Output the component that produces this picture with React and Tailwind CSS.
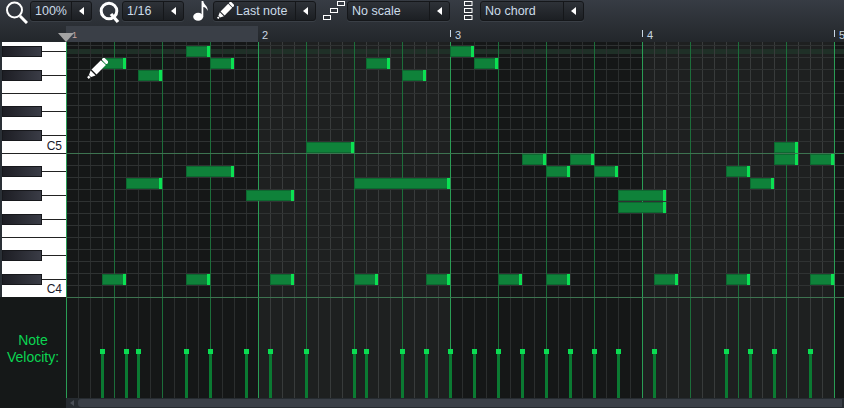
const ROW = 12;
const TOP = 42; // y of the grid canvas in the window
const PX = 66; // x of the grid canvas in the window

// [start x, end x, row]
const notes = [
  [186, 210, 0], [450, 474, 0],
  [102, 126, 1], [210, 234, 1], [366, 390, 1], [474, 498, 1],
  [138, 162, 2], [402, 426, 2],
  [306, 354, 8], [774, 798, 8],
  [522, 546, 9], [570, 594, 9], [774, 798, 9], [810, 834, 9],
  [186, 234, 10], [546, 570, 10], [594, 618, 10], [726, 750, 10],
  [126, 162, 11], [354, 450, 11], [750, 774, 11],
  [246, 294, 12], [618, 666, 12],
  [618, 666, 13],
  [102, 126, 19], [186, 210, 19], [270, 294, 19], [354, 378, 19], [426, 450, 19],
  [498, 522, 19], [546, 570, 19], [654, 678, 19], [726, 750, 19], [810, 834, 19],
];

const velocities = [
  102, 126, 138, 186, 210, 246, 270, 306, 354, 366, 402, 426, 450, 474, 498, 522,
  546, 570, 594, 618, 654, 726, 750, 774, 810,
];

// tops of the black keys, and lines on the white keys
const blackKeys = [46, 70, 106, 130, 166, 190, 214, 250, 274];
const shortLines = [51, 75, 111, 135, 171, 195, 219, 255, 279];
const fullLines = [93, 153, 237];

function range(from, to, step) {
  const out = [];
  for (let i = from; i <= to; i += step) out.push(i);
  return out;
}

function PencilIcon({ className }) {
  return (
    <svg viewBox="0 0 20 20" className={className}>
      <g transform="rotate(45 10 10)">
        <rect x="6.8" y="-2" width="6.4" height="3" rx="1" fill="#fff" />
        <rect x="6.8" y="1.8" width="6.4" height="12" fill="#fff" />
        <path d="M6.8 15 H13.2 L11.4 19 H8.6 Z" fill="#fff" />
        <rect x="8.9" y="19.6" width="2.2" height="2" fill="#fff" />
      </g>
    </svg>
  );
}

function Combo({ label, width, arrowWidth = 20, icon }) {
  return (
    <div
      className="flex h-[20px] shrink-0 items-center rounded-[3px] border border-[#15171a] bg-gradient-to-b from-[#2e3238] to-[#1c1f23] shadow-[0_1px_0_#3a3f46]"
      style={{ width }}
    >
      <div className="flex min-w-0 flex-1 items-center gap-[2px] pl-[4px] text-[12.5px] leading-none text-[#cbdbe8]">
        {icon}
        <span className="whitespace-nowrap">{label}</span>
      </div>
      <div
        className="flex h-full shrink-0 items-center justify-center border-l border-[#15171a]"
        style={{ width: arrowWidth }}
      >
        <span className="h-0 w-0 border-y-[4px] border-r-[5px] border-y-transparent border-r-white" />
      </div>
    </div>
  );
}

function Toolbar() {
  return (
    <div className="flex h-[26px] items-start pt-[1px]">
      <svg viewBox="0 0 24 24" className="ml-[4px] mt-[-1px] h-[24px] w-[24px] shrink-0" fill="none" stroke="#fff">
        <circle cx="10.5" cy="10" r="7.5" strokeWidth="2" />
        <path d="M16 16 L23 23" strokeWidth="3" />
      </svg>
      <div className="ml-[2px]">
        <Combo label="100%" width={62} />
      </div>
      <svg viewBox="0 0 24 24" className="ml-[6px] mt-[-1px] h-[24px] w-[24px] shrink-0" fill="none" stroke="#fff">
        <circle cx="11" cy="11" r="7.8" strokeWidth="3" />
        <path d="M13 14 L20 22" strokeWidth="3.4" />
      </svg>
      <Combo label="1/16" width={62} />
      <svg viewBox="0 0 18 22" className="ml-[8px] h-[21px] w-[18px] shrink-0" fill="#fff">
        <ellipse cx="6" cy="16.5" rx="5.2" ry="4.2" />
        <path d="M9.6 0 H11.4 C11.8 4 16.5 5 16 10.5 C15 7.5 13 6.5 11.4 6.2 V17 H9.6 Z" />
      </svg>
      <div className="ml-[3px]">
        <Combo
          label="Last note"
          width={103}
          icon={<PencilIcon className="ml-[-2px] h-[18px] w-[18px] shrink-0" />}
        />
      </div>
      <svg viewBox="0 0 23 20" className="ml-[7px] h-[20px] w-[23px] shrink-0" fill="none" stroke="#fff">
        <rect x="0.5" y="14.5" width="7" height="4" />
        <rect x="7.5" y="7.5" width="7" height="4" />
        <rect x="14.5" y="0.5" width="7" height="4" />
      </svg>
      <div className="ml-[1px]">
        <Combo label="No scale" width={103} />
      </div>
      <svg viewBox="0 0 9 20" className="ml-[14px] h-[20px] w-[9px] shrink-0" fill="none" stroke="#fff">
        <rect x="0.5" y="0.5" width="7.5" height="4" />
        <rect x="0.5" y="7.5" width="7.5" height="4" />
        <rect x="0.5" y="14.5" width="7.5" height="4" />
      </svg>
      <div className="ml-[7px]">
        <Combo label="No chord" width={104} />
      </div>
    </div>
  );
}

function Timeline() {
  const labelClass = "absolute top-[2px] text-[11px] leading-[14px] text-[#c8d6e2]";
  return (
    <div className="relative h-[16px]">
      <div className="absolute bottom-0 left-[66px] top-0 w-[192px] bg-[#3a3f47]" />
      <span className="absolute left-[72px] top-[2px] text-[9px] leading-[14px] text-[#c9a7a0]">1</span>
      <span className={`${labelClass} left-[262px]`}>2</span>
      {[450, 642, 834].map((x, i) => (
        <div key={x}>
          <span className="absolute top-[4px] h-[7px] w-[1px] bg-[#c8d6e2]" style={{ left: x }} />
          <span className={labelClass} style={{ left: x + 5 }}>{i + 3}</span>
        </div>
      ))}
      <span className="absolute left-[58px] top-[7px] h-0 w-0 border-x-[8px] border-t-[9px] border-x-transparent border-t-[#a3a3a3]" />
    </div>
  );
}

function Piano() {
  return (
    <div className="relative h-[255px] w-[66px] overflow-hidden border-l-2 border-[#2a3036] bg-white">
      {shortLines.map((y) => (
        <div key={y} className="absolute right-0 h-[1px] w-[24px] bg-[#222]" style={{ top: y - TOP }} />
      ))}
      {fullLines.map((y) => (
        <div key={y} className="absolute left-0 right-0 h-[1px] bg-[#222]" style={{ top: y - TOP }} />
      ))}
      {blackKeys.map((y) => (
        <div
          key={y}
          className="absolute left-0 h-[11px] w-[40px] border border-[#17181c] bg-gradient-to-r from-[#1d1e24] to-[#3a3c46]"
          style={{ top: y - TOP }}
        />
      ))}
      <span className="absolute right-[4px] top-[97px] font-['Liberation_Sans',sans-serif] text-[12px] leading-[14px] text-[#1a1a2a]">C5</span>
      <span className="absolute right-[4px] top-[240px] font-['Liberation_Sans',sans-serif] text-[12px] leading-[14px] text-[#1a1a2a]">C4</span>
    </div>
  );
}

function GridLines() {
  const w = 844 - PX;
  const h = 398 - TOP;
  const rollH = 297 - TOP;
  return (
    <svg className="absolute left-0 top-0" width={w} height={h} shapeRendering="crispEdges">
      <rect x={0} y={0} width={w} height={h} fill="#151717" />
      {[192, 576].map((x) => (
        <rect key={x} x={x} y={0} width={192} height={h} fill="#1e2020" />
      ))}
      <rect x={0} y={49 - TOP} width={w} height={5} fill="#1f3027" />
      {range(12, w, 12).map((x) => (
        <rect key={x} x={x} y={0} width={1} height={h} fill={Math.floor(x / 192) % 2 ? "#383b3b" : "#2b2e2e"} />
      ))}
      {range(3, rollH, ROW).map((y) => (
        <rect key={y} x={0} y={y} width={w} height={1} fill="#2f3232" />
      ))}
      {range(0, w, 48).map((x) => (
        <rect key={x} x={x} y={0} width={1} height={h} fill={x % 192 === 0 ? "#2a9d55" : "#1c6e3a"} />
      ))}
      <rect x={0} y={153 - TOP} width={w} height={1} fill="#3d7350" />
      <rect x={0} y={297 - TOP} width={w} height={1} fill="#3d7350" />
    </svg>
  );
}

function Note({ start, end, row }) {
  return (
    <div
      className="absolute flex h-[11px] justify-end bg-[#0f823a] shadow-[inset_0_0_0_1px_#0d6830]"
      style={{ left: start - PX, top: 45 + ROW * row + 1 - TOP, width: end - start }}
    >
      <span className="h-full w-[3px] bg-[#0be052]" />
    </div>
  );
}

function Velocity({ x }) {
  return (
    <>
      <div className="absolute top-[309px] h-[47px] w-[3px] bg-[#0b7a32]" style={{ left: x - PX - 1 }} />
      <div className="absolute top-[307px] h-[5px] w-[5px] bg-[#0bdc52]" style={{ left: x - PX - 2 }} />
    </>
  );
}

function Scrollbar() {
  return (
    <div className="flex h-[10px] items-center bg-[#262b30]">
      <div className="flex w-[12px] shrink-0 items-center justify-center">
        <span className="h-0 w-0 border-y-[3px] border-r-[4px] border-y-transparent border-r-[#4a4f57]" />
      </div>
      <div className="h-[8px] flex-1 rounded-l-[3px] bg-[#3a3f47]" />
      <div className="w-[2px] shrink-0" />
    </div>
  );
}

export default function App() {
  return (
    <div className="flex h-[408px] w-[844px] flex-col overflow-hidden bg-[#151818] font-['Liberation_Sans',sans-serif]">
      <div className="h-[42px] shrink-0 bg-gradient-to-b from-[#373c44] to-[#23272b]">
        <Toolbar />
        <Timeline />
      </div>
      <div className="flex min-h-0 flex-1">
        <div className="flex w-[66px] shrink-0 flex-col">
          <Piano />
          <div className="flex flex-1 flex-col items-center pt-[35px] text-[14px] leading-[17px] text-[#0bd552]">
            <span>Note</span>
            <span>Velocity:</span>
          </div>
        </div>
        <div className="flex min-w-0 flex-1 flex-col">
          <div className="relative flex-1 overflow-hidden">
            <GridLines />
            {notes.map(([start, end, row]) => (
              <Note key={`${start}-${row}`} start={start} end={end} row={row} />
            ))}
            {velocities.map((x) => (
              <Velocity key={x} x={x} />
            ))}
            <PencilIcon className="absolute left-[20px] top-[16px] h-[22px] w-[22px]" />
          </div>
          <Scrollbar />
        </div>
      </div>
    </div>
  );
}
